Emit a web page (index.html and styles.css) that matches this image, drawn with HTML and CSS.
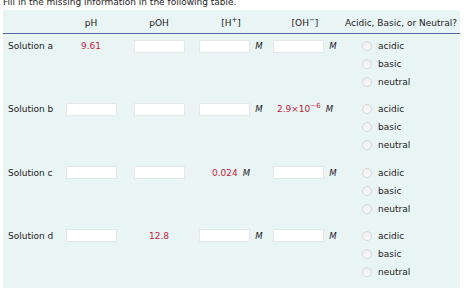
FILE: index.html
```html
<!DOCTYPE html>
<html>
<head>
<meta charset="utf-8">
<link rel="stylesheet" href="styles.css">
</head>
<body>
<p class="title">Fill in the missing information in the following table.</p>
<div class="panel">
  <div class="grid">
    <div class="hd"></div>
    <div class="hd">pH</div>
    <div class="hd">pOH</div>
    <div class="hd">[H<sup>+</sup>]</div>
    <div class="hd">[OH<sup>−</sup>]</div>
    <div class="hd">Acidic, Basic, or Neutral?</div>

    <div class="cell lbl">Solution a</div>
    <div class="cell"><span class="val">9.61</span></div>
    <div class="cell"><span class="box"></span></div>
    <div class="cell"><span class="box"></span><i class="m">M</i></div>
    <div class="cell"><span class="box"></span><i class="m">M</i></div>
    <div class="cell radios">
      <div class="opt"><span class="rb"></span>acidic</div>
      <div class="opt"><span class="rb"></span>basic</div>
      <div class="opt"><span class="rb"></span>neutral</div>
    </div>

    <div class="cell lbl">Solution b</div>
    <div class="cell"><span class="box"></span></div>
    <div class="cell"><span class="box"></span></div>
    <div class="cell"><span class="box"></span><i class="m">M</i></div>
    <div class="cell"><span class="val">2.9×10<sup>−6</sup></span><i class="m">M</i></div>
    <div class="cell radios">
      <div class="opt"><span class="rb"></span>acidic</div>
      <div class="opt"><span class="rb"></span>basic</div>
      <div class="opt"><span class="rb"></span>neutral</div>
    </div>

    <div class="cell lbl">Solution c</div>
    <div class="cell"><span class="box"></span></div>
    <div class="cell"><span class="box"></span></div>
    <div class="cell"><span class="val">0.024</span><i class="m">M</i></div>
    <div class="cell"><span class="box"></span><i class="m">M</i></div>
    <div class="cell radios">
      <div class="opt"><span class="rb"></span>acidic</div>
      <div class="opt"><span class="rb"></span>basic</div>
      <div class="opt"><span class="rb"></span>neutral</div>
    </div>

    <div class="cell lbl last">Solution d</div>
    <div class="cell last"><span class="box"></span></div>
    <div class="cell last"><span class="val">12.8</span></div>
    <div class="cell last"><span class="box"></span><i class="m">M</i></div>
    <div class="cell last"><span class="box"></span><i class="m">M</i></div>
    <div class="cell radios last">
      <div class="opt"><span class="rb"></span>acidic</div>
      <div class="opt"><span class="rb"></span>basic</div>
      <div class="opt"><span class="rb"></span>neutral</div>
    </div>
  </div>
</div>
</body>
</html>
```

FILE: styles.css
```css
html, body {
  margin: 0;
  padding: 0;
  background: #ffffff;
}
body {
  font-family: "DejaVu Sans", Verdana, sans-serif;
  font-size: 9px;
  color: #222222;
  overflow: hidden;
}
.title {
  margin: -4px 0 1px 3px;
  font-size: 9px;
  line-height: 13px;
}
.panel {
  margin-left: 3px;
  width: 457px;
  background: #e9f4f5;
}
.grid {
  display: grid;
  grid-template-columns: 55px 66px 70px 74px 74px 118px;
}
.hd {
  padding: 7px 0 3px;
  line-height: 13px;
  text-align: center;
  border-bottom: 1px solid #56679c;
}
sup {
  font-size: 7px;
  line-height: 0;
  vertical-align: 4px;
}
.cell {
  padding: 3px 0 6.3px;
  height: 54px;
  display: flex;
  justify-content: center;
  align-items: flex-start;
}
.cell.last {
  padding-bottom: 7px;
}
.lbl {
  justify-content: flex-start;
  padding-left: 5px;
  line-height: 18px;
  white-space: nowrap;
}
.cell > .val, .cell > .m {
  line-height: 18px;
}
.val {
  color: #c41f3c;
}
.box {
  display: inline-block;
  width: 51px;
  height: 13px;
  margin-top: 2.5px;
  background: #ffffff;
  border: 1px solid #e4e8ea;
  box-sizing: border-box;
}
.m {
  font-style: italic;
  margin-left: 5px;
  font-size: 8.5px;
}
.radios {
  flex-direction: column;
  justify-content: flex-start;
  align-items: flex-start;
  padding-left: 20px;
}
.opt {
  display: flex;
  align-items: center;
  height: 18px;
}
.rb {
  display: inline-block;
  width: 10px;
  height: 10px;
  border-radius: 50%;
  border: 1px solid #d4d8da;
  background: linear-gradient(#eeeeee, #fbfbfb);
  margin-right: 6px;
  box-sizing: border-box;
}
```
